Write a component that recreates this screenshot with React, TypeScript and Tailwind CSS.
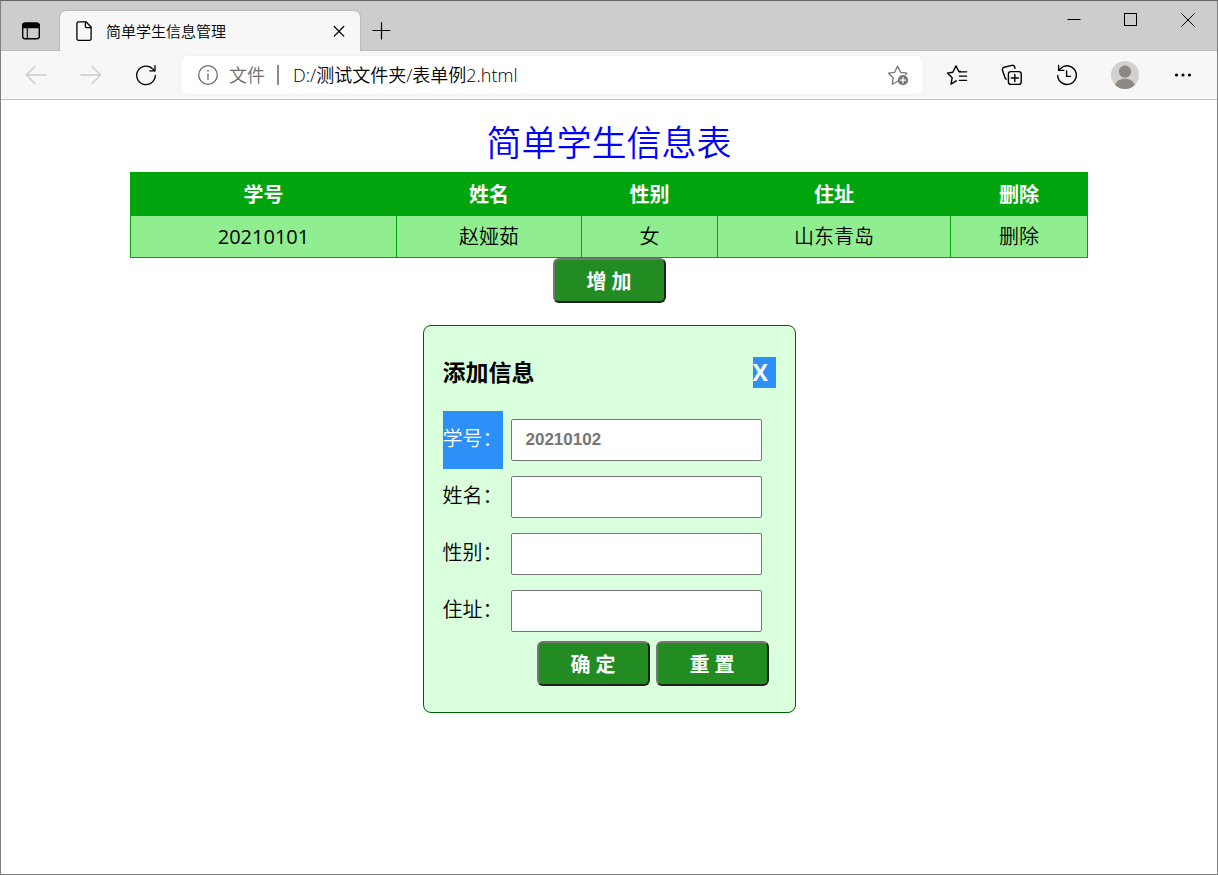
import React from 'react';

interface Student {
  id: string;
  name: string;
  gender: string;
  address: string;
}

const students: Student[] = [
  { id: '20210101', name: '赵娅茹', gender: '女', address: '山东青岛' },
];

const fields = [
  { key: 'id', label: '学号：', placeholder: '20210102', selected: true },
  { key: 'name', label: '姓名：', placeholder: '', selected: false },
  { key: 'gender', label: '性别：', placeholder: '', selected: false },
  { key: 'address', label: '住址：', placeholder: '', selected: false },
];

interface IconProps {
  className?: string;
  strokeWidth?: number;
  children: React.ReactNode;
}

const Icon: React.FC<IconProps> = ({ className = '', strokeWidth = 1.3, children }) => (
  <svg
    viewBox="0 0 22 22"
    className={`block w-[22px] h-[22px] ${className}`}
    fill="none"
    stroke="currentColor"
    strokeWidth={strokeWidth}
    strokeLinecap="round"
    strokeLinejoin="round"
    aria-hidden="true"
  >
    {children}
  </svg>
);

const GreenButton: React.FC<{ type?: 'button' | 'submit' | 'reset'; children: React.ReactNode }> = ({
  type = 'button',
  children,
}) => (
  <button
    type={type}
    className="w-[113px] h-[45px] rounded-md border-2 border-t-[#767676] border-l-[#767676] border-r-[#212121] border-b-[#212121] bg-[#228b22] pt-[2px] text-white text-xl leading-6 font-bold"
  >
    {children}
  </button>
);

const TitleBar: React.FC = () => (
  <div className="flex h-[50px] bg-[#cdcdcd] shadow-[inset_0_-1px_0_#bcbcbc]">
    <button type="button" aria-label="标签页操作" className="w-[59px] pl-[19px] pt-[9px]">
      <Icon strokeWidth={1.4}>
        <rect x="2.7" y="3.2" width="16.6" height="15.6" rx="2.6" />
        <path d="M2.7 7.6V5.8a2.6 2.6 0 0 1 2.6-2.6h11.4a2.6 2.6 0 0 1 2.6 2.6v1.8z" fill="currentColor" />
        <path d="M7.3 7.6v11.2" strokeWidth="1.1" />
      </Icon>
    </button>
    <div className="mt-[10px] flex w-[300px] items-center rounded-t-md bg-[#f7f7f7] pl-[13px] pr-[10px] shadow-[0_0_2px_rgba(0,0,0,0.3)] [clip-path:inset(-3px_-3px_0_-3px)]">
      <Icon strokeWidth={1.3}>
        <path d="M5.5 1.8h7.4l5.2 5.2v11.7a1.6 1.6 0 0 1-1.6 1.6h-11a1.6 1.6 0 0 1-1.6-1.6V3.4a1.6 1.6 0 0 1 1.6-1.6z" />
        <path d="M12.4 2v4.2a1.4 1.4 0 0 0 1.4 1.4H18" />
      </Icon>
      <span className="ml-[11px] grow text-[15px] leading-5">简单学生信息管理</span>
      <button type="button" aria-label="关闭标签页">
        <Icon>
          <path d="M6.3 6.5l9.4 9.6M15.7 6.5l-9.4 9.6" />
        </Icon>
      </button>
    </div>
    <button type="button" aria-label="新建标签页" className="ml-[10px] pt-[9px]">
      <Icon strokeWidth={1.2}>
        <path d="M2.9 10.5h17M11.5 2.500v16.500" />
      </Icon>
    </button>
    <div className="ml-auto flex gap-[35px] pr-[18px]">
      <button type="button" aria-label="最小化" className="h-[38px]">
        <Icon strokeWidth={1}>
          <path d="M4.5 10.5h13" strokeLinecap="butt" />
        </Icon>
      </button>
      <button type="button" aria-label="最大化" className="h-[38px]">
        <Icon strokeWidth={1}>
          <rect x="4.5" y="4.5" width="12" height="12" strokeLinejoin="miter" />
        </Icon>
      </button>
      <button type="button" aria-label="关闭" className="h-[38px]">
        <Icon strokeWidth={1}>
          <path d="M4.5 4.5l13 13M17.5 4.5l-13 13" />
        </Icon>
      </button>
    </div>
  </div>
);

const ToolBar: React.FC = () => (
  <div className="flex h-[49px] items-center border-b border-[#c0c0c0] bg-[#f7f7f7] pl-6 pr-[23px]">
    <div className="flex gap-[33px]">
      <button type="button" aria-label="后退" className="text-[#cacaca]">
        <Icon>
          <path d="M21 11H1.5M10 2.5L1.3 11l8.7 8.5" />
        </Icon>
      </button>
      <button type="button" aria-label="前进" className="text-[#cacaca]">
        <Icon>
          <path d="M1 11h19.5M12 2.5l8.7 8.5-8.7 8.5" />
        </Icon>
      </button>
      <button type="button" aria-label="刷新">
        <Icon strokeWidth={1.3}>
          <path d="M20.3 11.3A9.3 9.3 0 1 1 17.9 5.1l1.8 1.6" />
          <path d="M20 1.6v5.2h-5.2" />
        </Icon>
      </button>
    </div>
    <div className="ml-6 mr-[23px] flex h-[38px] grow items-center rounded-md bg-white pl-4 pr-[14px] text-lg leading-6 shadow-[0_0_2px_rgba(0,0,0,0.08)]">
      <Icon className="text-[#6e6e6e]">
        <circle cx="11" cy="11" r="9.3" />
        <path d="M11 9.8v5.6" />
        <path d="M11 6.6v.3" strokeWidth="1.6" />
      </Icon>
      <span className="ml-[10px] text-[#6e6e6e]">文件</span>
      <span className="ml-3 h-5 w-[2px] bg-[#8c8c8c]" />
      <input
        type="text"
        aria-label="地址栏"
        defaultValue="D:/测试文件夹/表单例2.html"
        className="ml-[14px] w-0 grow bg-transparent outline-none"
      />
      <button type="button" aria-label="收藏此页" className="text-[#767676]">
        <Icon>
          <path d="M10.6 17.2l-5.4 3 1-6.4L1.5 9.2l6.1-.9 3-6.2 3 6.2 6.2.9-1.2 1.2" />
          <circle cx="16" cy="16.2" r="5.1" fill="currentColor" stroke="none" />
          <path d="M16 13.6v5.2M13.4 16.2h5.2" stroke="#fff" />
        </Icon>
      </button>
    </div>
    <div className="flex items-center gap-[33px]">
      <button type="button" aria-label="收藏夹">
        <Icon strokeWidth={1.4}>
          <path d="M10.3 16.8l-5.3 3.3 1.2-6.4-4.8-4.6 5.4-.8 3.2-6.4 2.8 5.6h1.8" />
          <path d="M13.4 7.8h7.2M13.4 12.2h7.2M13.4 16.4h7.2" strokeWidth="1.3" />
        </Icon>
      </button>
      <button type="button" aria-label="集锦">
        <Icon strokeWidth={1.4}>
          <rect x="7.4" y="7.6" width="12.8" height="12.8" rx="2.4" />
          <path d="M13.8 10.4v7.2M10.2 14h7.2" />
          <path d="M5.2 15.2a3 3 0 0 1-1.3-1.7L1.5 6.2a2.3 2.3 0 0 1 1.6-2.9l7.8-1.9a2.3 2.3 0 0 1 2.8 1.7l.3 1.2" />
        </Icon>
      </button>
      <button type="button" aria-label="历史记录">
        <Icon strokeWidth={1.4}>
          <path d="M1.7 11.5A9.3 9.3 0 1 0 4.8 4.2L2.6 6.2" />
          <path d="M2.6 1.4v5h5.2M10.6 7v5.4h3.8" />
        </Icon>
      </button>
      <button type="button" aria-label="用户">
        <svg viewBox="0 0 28 28" className="block h-7 w-7" aria-hidden="true">
          <circle cx="14" cy="14" r="14" fill="#d3d1cd" />
          <circle cx="14" cy="10.6" r="6.1" fill="#8d8884" />
          <path d="M4.2 24c1.2-4 5-6.2 9.8-6.2s8.600 2.200 9.800 6.200a14 14 0 0 1-19.600 0z" fill="#8d8884" />
        </svg>
      </button>
      <button type="button" aria-label="设置及其他">
        <Icon>
          <g fill="currentColor" stroke="none">
            <circle cx="4.500" cy="11" r="1.600" />
            <circle cx="11" cy="11" r="1.600" />
            <circle cx="17.500" cy="11" r="1.600" />
          </g>
        </Icon>
      </button>
    </div>
  </div>
);

const StudentTable: React.FC = () => (
  <table className="mx-auto w-4/5 table-fixed border-collapse text-center text-xl leading-6">
    <caption className="pt-[19px] pb-[6px] text-[35px] leading-[47px] text-[#0000ff]">
      简单学生信息表
    </caption>
    <colgroup>
      <col className="w-[266px]" />
      <col className="w-[185px]" />
      <col className="w-[136px]" />
      <col className="w-[233px]" />
      <col className="w-[137px]" />
    </colgroup>
    <thead>
      <tr className="h-[43px] bg-[#00a40c] text-white">
        {['学号', '姓名', '性别', '住址', '删除'].map((title) => (
          <th key={title} className="border border-[#00a40c] pt-[2px] font-bold">{title}</th>
        ))}
      </tr>
    </thead>
    <tbody>
      {students.map((s) => (
        <tr key={s.id} className="h-[42px] bg-[#90ee90]">
          <td className="border border-[#00a40c] font-normal">{s.id}</td>
          <td className="border border-[#00a40c]">{s.name}</td>
          <td className="border border-[#00a40c]">{s.gender}</td>
          <td className="border border-[#00a40c]">{s.address}</td>
          <td className="border border-[#00a40c]"><a href="#delete">删除</a></td>
        </tr>
      ))}
    </tbody>
  </table>
);

const AddForm: React.FC = () => (
  <form
    onSubmit={(e) => e.preventDefault()}
    className="mx-auto mt-[22px] w-[373px] rounded-lg border border-[#006400] bg-[#d9ffdc] px-[19px] pt-[30px] pb-[26px]"
  >
    <div className="mb-[23px] flex items-center justify-between text-[23px] leading-[31px] font-bold">
      <h3 className="pt-px">添加信息</h3>
      <button type="button" aria-label="关闭表单" className="w-[23px] bg-[#2d8ff8] text-left text-white">X</button>
    </div>
    {fields.map((f) => (
      <div key={f.key} className="flex h-[57px] gap-2 text-xl leading-[56px]">
        <label
          htmlFor={f.key}
          className={f.selected ? 'h-[58px] w-[60px] bg-[#2d8ff8] text-white' : 'w-[60px]'}
        >
          {f.label}
        </label>
        <input
          id={f.key}
          type="text"
          placeholder={f.placeholder}
          className="mt-2 h-[42px] w-[251px] rounded-xs border border-[#767676] bg-white px-[14px] font-['Liberation_Sans',sans-serif] text-[17px] font-bold placeholder:text-[#757575]"
        />
      </div>
    ))}
    <div className="mt-[2px] flex justify-end gap-[6px] pr-[7px]">
      <GreenButton type="submit">确 定</GreenButton>
      <GreenButton type="reset">重 置</GreenButton>
    </div>
  </form>
);

const App: React.FC = () => {
  return (
    <div
      lang="zh-CN"
      className="flex min-h-screen flex-col border border-[#808080] border-t-[#666666] bg-white font-['Open_Sans','Noto_Sans_CJK_SC',sans-serif] font-[350] text-black"
    >
      <TitleBar />
      <ToolBar />
      <main className="px-[10px] pb-[10px]">
        <StudentTable />
        <div className="flex justify-center">
          <GreenButton>增 加</GreenButton>
        </div>
        <AddForm />
      </main>
    </div>
  );
};

export default App;
